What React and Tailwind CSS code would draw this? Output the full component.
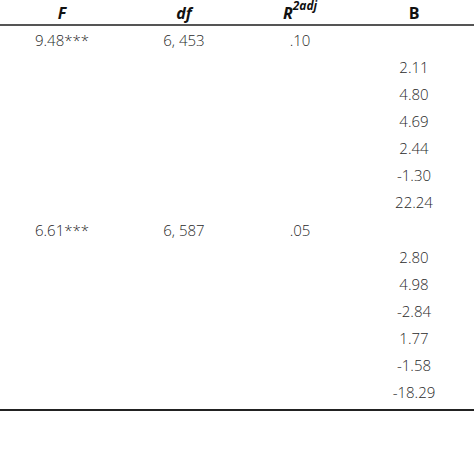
export default function App() {
  const rows = [
    ["9.48***", "6, 453", ".10", ""],
    ["", "", "", "2.11"],
    ["", "", "", "4.80"],
    ["", "", "", "4.69"],
    ["", "", "", "2.44"],
    ["", "", "", "-1.30"],
    ["", "", "", "22.24"],
    ["6.61***", "6, 587", ".05", ""],
    ["", "", "", "2.80"],
    ["", "", "", "4.98"],
    ["", "", "", "-2.84"],
    ["", "", "", "1.77"],
    ["", "", "", "-1.58"],
    ["", "", "", "-18.29"],
  ];
  const cols = "grid grid-cols-[124px_120px_112px_116px]";
  return (
    <div className="w-[474px] h-[474px] bg-white text-[#2a2a2a]" style={{ fontFamily: '"Open Sans", "Noto Sans", sans-serif' }}>
      <div className={`${cols} h-[24px] items-center pt-[2px] text-[16px] font-bold text-[#111] leading-none`}>
        <div className="text-center italic">F</div>
        <div className="text-center italic">df</div>
        <div className="text-center italic">R<sup className="text-[12px] leading-none align-[3px]">2adj</sup></div>
        <div className="text-center">B</div>
      </div>
      <div className="h-[2px] bg-[#555]" />
      <div className="pt-[0.5px]">
        {rows.map((r, i) => (
          <div key={i} className={`${cols} h-[27.15px] items-center text-[15px] font-light leading-none`}>
            {r.map((c, j) => (
              <div key={j} className="text-center">{c}</div>
            ))}
          </div>
        ))}
      </div>
      <div className="mt-[3px] h-[2px] bg-[#222]" />
    </div>
  );
}
